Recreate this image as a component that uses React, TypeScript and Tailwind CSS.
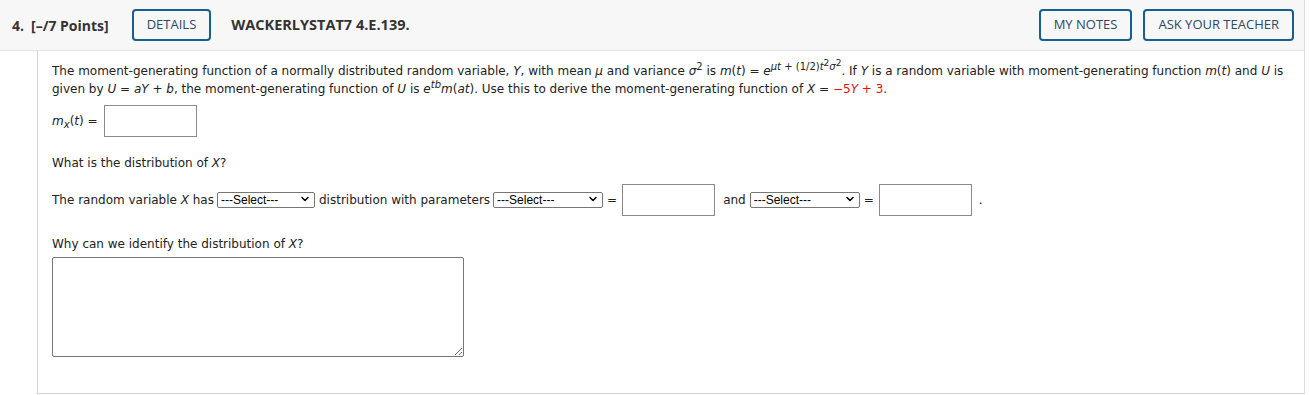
import { ChevronDown } from "lucide-react";

function Var({ children }: { children: React.ReactNode }) {
  return <i className="italic">{children}</i>;
}

function HeaderButton({ label }: { label: string }) {
  return (
    <button
      type="button"
      className="h-8 rounded-[4px] border-2 border-[#175f8f] bg-[#f7f7f7] px-[13px] text-[13px] text-[#2d4866] [font-family:'Open_Sans',sans-serif]"
    >
      {label}
    </button>
  );
}

function SelectBox({ width }: { width: string }) {
  return (
    <span className={`relative inline-block align-middle ${width}`}>
      <select className="h-4 w-full appearance-none rounded-[2px] border border-[#767676] bg-white pl-[3px] text-[12px] leading-[14px] text-black [font-family:'Liberation_Sans',Arial,sans-serif]">
        <option>---Select---</option>
      </select>
      <ChevronDown
        size={12}
        strokeWidth={3}
        className="pointer-events-none absolute right-[4px] top-[2px] text-black"
      />
    </span>
  );
}

function AnswerBox() {
  return (
    <input
      type="text"
      className="h-8 w-[93px] shrink-0 border border-[#8a8a8a] bg-white align-middle"
    />
  );
}

export default function App() {
  return (
    <div className="w-[1305px] border-r border-[#dcdcdc] bg-white">
      <div className="flex h-[51px] items-center border-b border-[#e2e2e2] bg-[#f7f7f7] pl-3 pr-[10px] [font-family:'Open_Sans',sans-serif]">
        <span className="text-[14px] font-bold text-[#333]">4.</span>
        <span className="ml-[7px] text-[14px] font-bold text-[#333]">[–/7 Points]</span>
        <div className="ml-[23px]">
          <HeaderButton label="DETAILS" />
        </div>
        <span className="ml-[20px] text-[14.5px] font-bold text-[#333]">WACKERLYSTAT7 4.E.139.</span>
        <div className="ml-auto flex gap-[11px]">
          <HeaderButton label="MY NOTES" />
          <HeaderButton label="ASK YOUR TEACHER" />
        </div>
      </div>

      <div className="ml-[37px] border-b border-l border-[#d3d3d3] pb-[36px] pl-[14px] pr-[6px] pt-[11px] text-[12px] leading-[18px] text-[#222] [font-family:'DejaVu_Sans',Verdana,sans-serif]">
        <p>
          The moment-generating function of a normally distributed random variable, <Var>Y</Var>, with mean{" "}
          <Var>μ</Var> and variance <Var>σ</Var>
          <sup className="text-[10px]">2</sup> is <Var>m</Var>(<Var>t</Var>) = <Var>e</Var>
          <sup className="text-[10px]">
            <Var>μt</Var> + (1/2)<Var>t</Var>
            <sup className="text-[9px]">2</sup>
            <Var>σ</Var>
            <sup className="text-[9px]">2</sup>
          </sup>
          . If <Var>Y</Var> is a random variable with moment-generating function <Var>m</Var>(<Var>t</Var>) and{" "}
          <Var>U</Var>
          <span> is</span> <span>given by </span>
          <Var>U</Var> = <Var>aY</Var> + <Var>b</Var>, the moment-generating function of{" "}
          <Var>U</Var> is <Var>e</Var>
          <sup className="text-[10px]">
            <Var>tb</Var>
          </sup>
          <Var>m</Var>(<Var>at</Var>). Use this to derive the moment-generating function of <Var>X</Var> ={" "}
          <span className="text-[#d11]">
            −5<Var>Y</Var> + 3
          </span>
          .
        </p>

        <div className="mt-[7px] flex items-center gap-[6px]">
          <span>
            <Var>m</Var>
            <sub className="text-[10px]">
              <Var>x</Var>
            </sub>
            (<Var>t</Var>) =
          </span>
          <AnswerBox />
        </div>

        <p className="mt-[17px]">
          What is the distribution of <Var>X</Var>?
        </p>

        <div className="mt-[12px] flex items-center">
          <span>
            The random variable <Var>X</Var> has
          </span>
          <span className="ml-[3px]">
            <SelectBox width="w-[98px]" />
          </span>
          <span className="ml-[4px]">distribution with parameters</span>
          <span className="ml-[3px]">
            <SelectBox width="w-[110px]" />
          </span>
          <span className="ml-[4px]">=</span>
          <span className="ml-[5px]">
            <AnswerBox />
          </span>
          <span className="ml-[8px]">and</span>
          <span className="ml-[4px]">
            <SelectBox width="w-[110px]" />
          </span>
          <span className="ml-[4px]">=</span>
          <span className="ml-[5px]">
            <AnswerBox />
          </span>
          <span className="ml-[7px]">.</span>
        </div>

        <p className="mt-[19px]">
          Why can we identify the distribution of <Var>X</Var>?
        </p>
        <textarea className="mt-[4px] block h-[100px] w-[412px] rounded-[2px] border border-[#767676] bg-white" />
      </div>
    </div>
  );
}
